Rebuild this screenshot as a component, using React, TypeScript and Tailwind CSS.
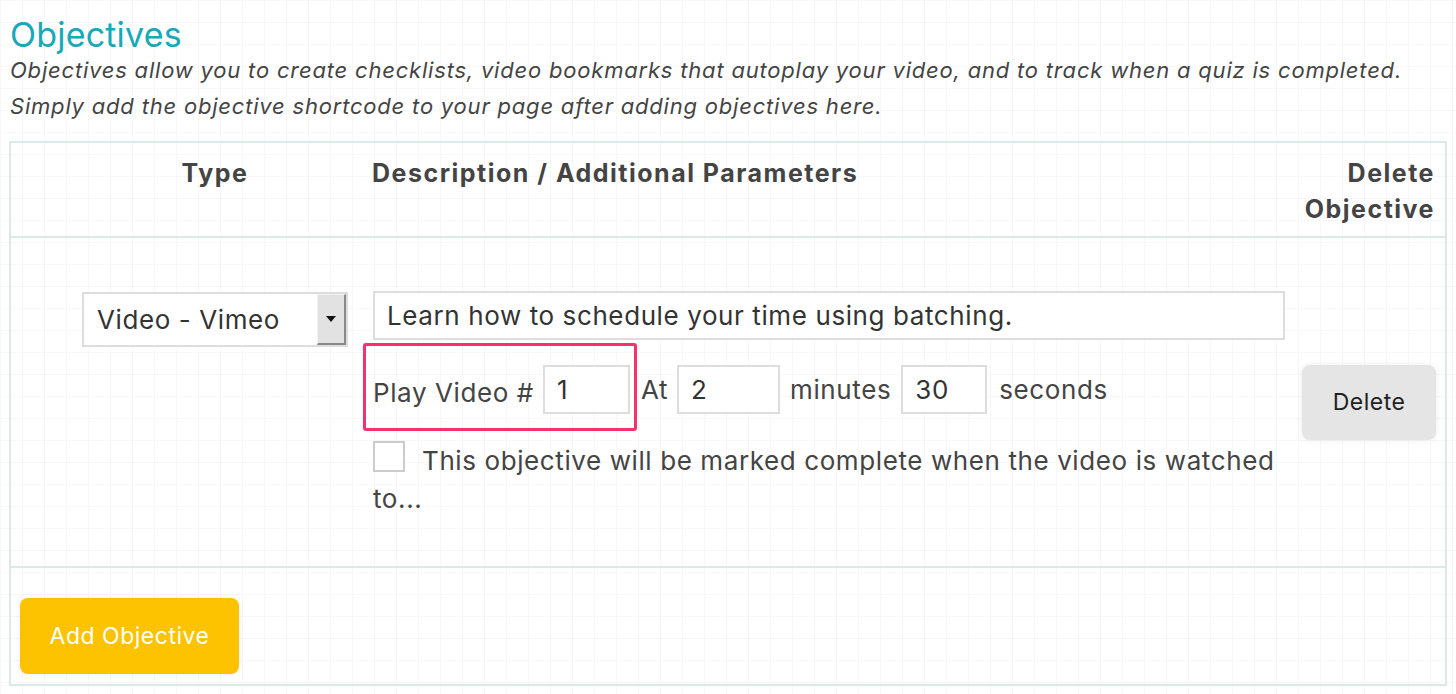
import { useState } from 'react';

export default function App() {
  const [desc, setDesc] = useState('Learn how to schedule your time using batching.');
  const [video, setVideo] = useState('1');
  const [mins, setMins] = useState('2');
  const [secs, setSecs] = useState('30');
  const [done, setDone] = useState(false);

  const field =
    'h-[49px] border-2 border-[#dddddd] bg-white px-[12px] text-[26px] tracking-[0.6px] text-[#333] outline-none';

  return (
    <div className="h-[694px] w-[1456px] overflow-hidden bg-white bg-[linear-gradient(to_right,#f7f7f7_1px,transparent_1px),linear-gradient(to_bottom,#f7f7f7_1px,transparent_1px)] bg-[length:22px_22px] font-['Inter',sans-serif] text-[#444]">
      <div className="pl-[10px] pt-[17px]">
        <h1 className="text-[34px] leading-[36px] tracking-[0.2px] text-[#17a9b7]">Objectives</h1>
        <p className="mt-[-1px] text-[22px] italic leading-[36px] tracking-[0.8px] text-[#444]">
          Objectives allow you to create checklists, video bookmarks that autoplay your video, and to track when a quiz is completed.
          <br />
          Simply add the objective shortcode to your page after adding objectives here.
        </p>
      </div>

      <div className="ml-[9px] mt-[17px] w-[1438px] border-2 border-[#dde8e8]">
        {/* header */}
        <div className="flex border-b-2 border-[#dde8e8] pb-[9px] pt-[12px] text-[25px] font-bold leading-[36px] tracking-[1.5px] text-[#444]">
          <div className="w-[352px] pl-[71px]">
            <div className="w-[266px] text-center">Type</div>
          </div>
          <div className="w-[927px] pl-[9px]">Description / Additional Parameters</div>
          <div className="flex-1 pr-[10px] text-right">
            Delete
            <br />
            Objective
          </div>
        </div>

        {/* objective row */}
        <div className="flex h-[330px] items-center border-b-2 border-[#dde8e8]">
          <div className="w-[352px] self-start pl-[71px] pt-[54px]">
            <div className="flex h-[55px] w-[266px] items-stretch border-2 border-[#dddddd] bg-white">
              <div className="flex flex-1 items-center pl-[13px] text-[26px] tracking-[0.6px] text-[#333]">Video - Vimeo</div>
              <div className="flex w-[29px] items-center justify-center border-b-2 border-l border-r-2 border-t border-b-[#8a8a8a] border-l-[#f2f2f2] border-r-[#8a8a8a] border-t-[#f2f2f2] bg-[#e2e2e2]">
                <svg width="10" height="6" viewBox="0 0 10 6">
                  <path d="M0 0h10L5 6z" fill="#111" />
                </svg>
              </div>
            </div>
          </div>

          <div className="w-[927px] self-start pl-[10px] pt-[53px]">
            <input
              value={desc}
              onChange={(e) => setDesc(e.target.value)}
              className={`${field} w-[912px]`}
            />

            <div className="relative mt-[25px] flex items-center text-[26px] tracking-[0.6px] text-[#444]">
              <div className="pointer-events-none absolute left-[-10px] top-[-22px] h-[88px] w-[274px] rounded-[3px] border-[3px] border-[#f7306e]" />
              <span className="mr-[9px] mt-[6px]">Play Video #</span>
              <input value={video} onChange={(e) => setVideo(e.target.value)} className={`${field} w-[87px]`} />
              <span className="ml-[11px] mr-[9px]">At</span>
              <input value={mins} onChange={(e) => setMins(e.target.value)} className={`${field} w-[103px]`} />
              <span className="ml-[10px] mr-[10px]">minutes</span>
              <input value={secs} onChange={(e) => setSecs(e.target.value)} className={`${field} w-[86px]`} />
              <span className="ml-[12px]">seconds</span>
            </div>

            <label className="mt-[27px] block w-[912px] text-[26px] leading-[38px] tracking-[0.6px] text-[#444]">
              <span
                onClick={() => setDone(!done)}
                className="mr-[17px] inline-block h-[31px] w-[32px] border-2 border-[#cccccc] bg-white align-[-2px]"
              >
                {done && <span className="block text-center text-[20px] leading-[27px]">✓</span>}
              </span>
              This objective will be marked complete when the video is watched to...
            </label>
          </div>

          <div className="flex flex-1 justify-end pr-[9px]">
            <button className="h-[75px] w-[134px] rounded-lg bg-[#e5e5e5] text-[23px] tracking-[0.5px] text-[#222] shadow-[0_0_6px_rgba(0,0,0,0.08)]">
              Delete
            </button>
          </div>
        </div>

        {/* footer */}
        <div className="h-[116px] pl-[9px] pt-[30px]">
          <button className="h-[76px] w-[219px] rounded-lg bg-[#fdc300] text-[23px] tracking-[0.5px] text-white shadow-[0_0_6px_rgba(0,0,0,0.08)]">
            Add Objective
          </button>
        </div>
      </div>
    </div>
  );
}
